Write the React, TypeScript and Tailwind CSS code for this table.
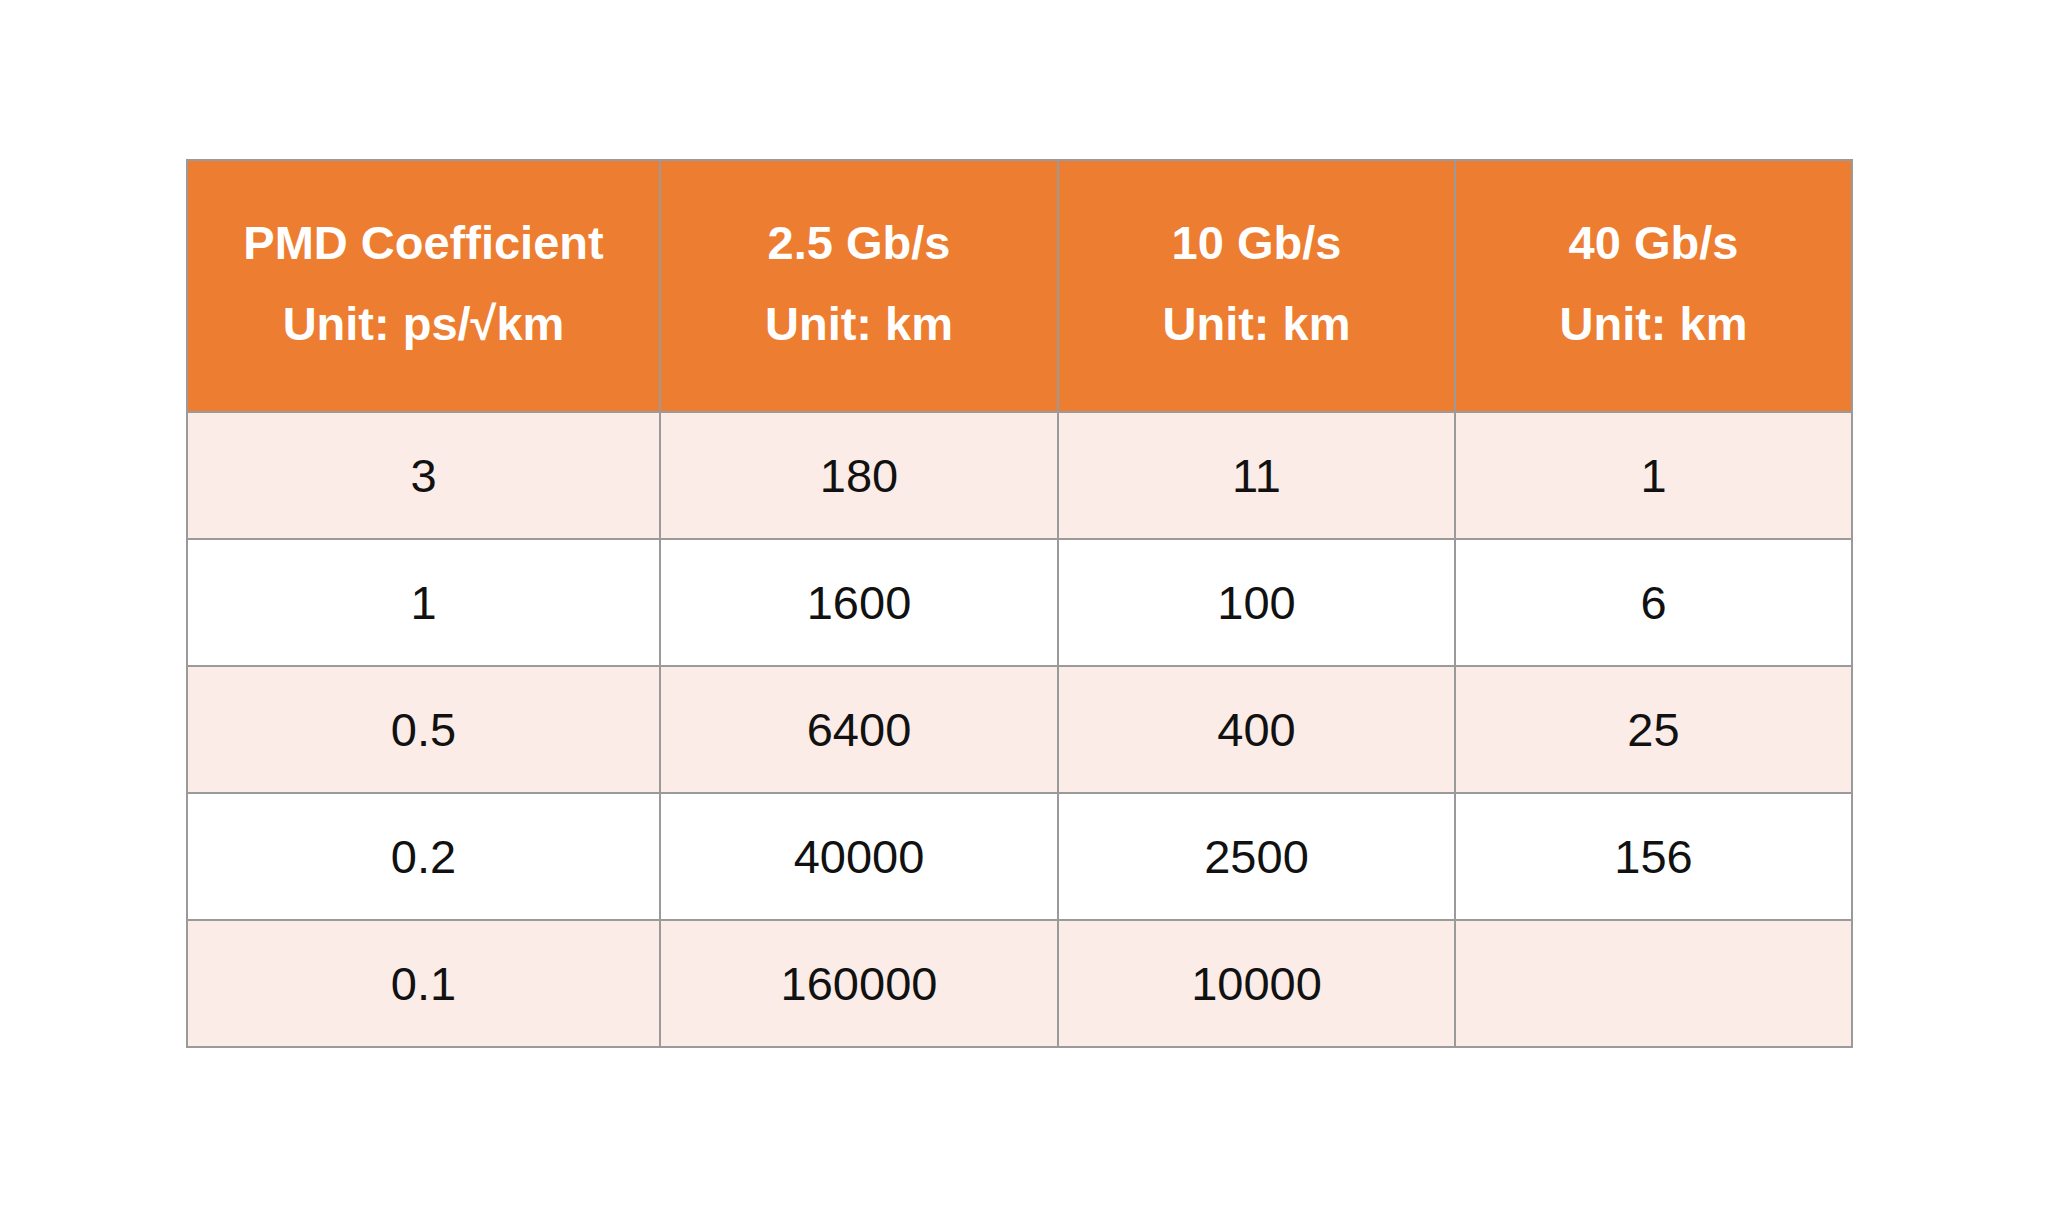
const headers = [
  ['PMD Coefficient', 'Unit: ps/√km'],
  ['2.5 Gb/s', 'Unit: km'],
  ['10 Gb/s', 'Unit: km'],
  ['40 Gb/s', 'Unit: km'],
];

const rows = [
  ['3', '180', '11', '1'],
  ['1', '1600', '100', '6'],
  ['0.5', '6400', '400', '25'],
  ['0.2', '40000', '2500', '156'],
  ['0.1', '160000', '10000', ''],
];

export default function App() {
  return (
    <div className="w-[2048px] h-[1207px] bg-white pt-[159px] pl-[186px] font-['Liberation_Sans',Arial,sans-serif]">
      <table className="table-fixed border-collapse w-[1665px]">
        <colgroup>
          <col className="w-[473px]" />
          <col className="w-[398px]" />
          <col className="w-[397px]" />
          <col className="w-[397px]" />
        </colgroup>
        <thead>
          <tr className="h-[252px] bg-[#ed7d31]">
            {headers.map(([a, b]) => (
              <th
                key={a}
                className="border-2 border-[#9a9a9a] text-center align-middle text-white font-bold text-[47px] leading-[81px] pb-[6px]"
              >
                <div>{a}</div>
                <div>{b}</div>
              </th>
            ))}
          </tr>
        </thead>
        <tbody>
          {rows.map((r, i) => (
            <tr key={i} className={i % 2 === 0 ? 'h-[127px] bg-[#fbece7]' : 'h-[127px] bg-white'}>
              {r.map((c, j) => (
                <td
                  key={j}
                  className="border-2 border-[#9a9a9a] text-center align-middle text-[#111] text-[47px] leading-none"
                >
                  {c}
                </td>
              ))}
            </tr>
          ))}
        </tbody>
      </table>
    </div>
  );
}
